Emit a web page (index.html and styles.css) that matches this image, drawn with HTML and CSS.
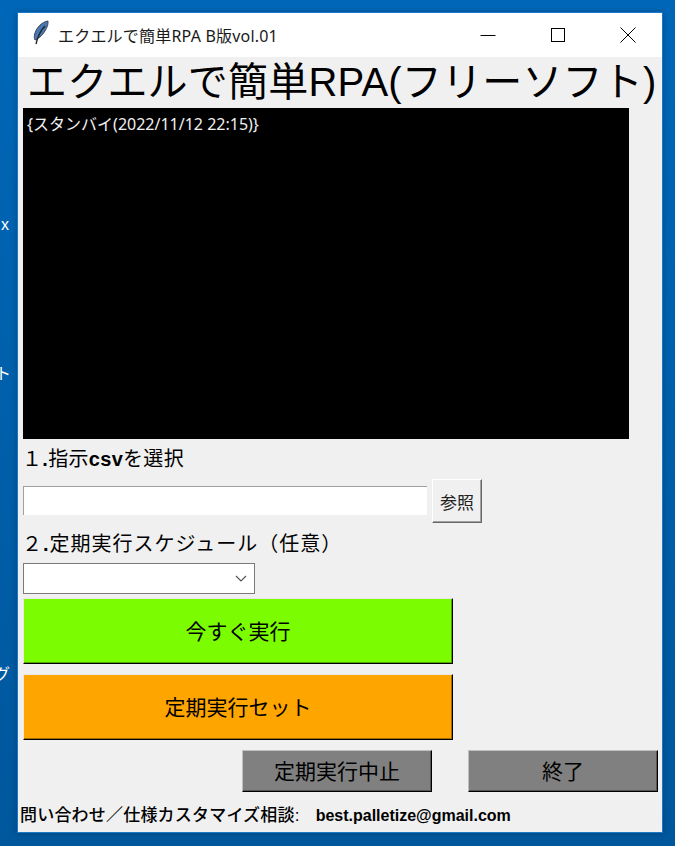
FILE: index.html
```html
<!DOCTYPE html>
<html lang="ja">
<head>
<meta charset="UTF-8">
<title>エクエルで簡単RPA B版vol.01</title>
<link rel="stylesheet" href="styles.css">
</head>
<body>
<!-- desktop icon labels cut off by the window -->
<span class="desk-label desk-x">x</span>
<span class="desk-label desk-to">ト</span>
<span class="desk-label desk-gu">グ</span>

<div class="window">
  <div class="titlebar">
    <svg class="feather" width="20" height="28" viewBox="0 0 20 28">
      <path d="M17 1C11 2 6 7 4 13c-1 3-1 5 0 7l2-1c4-2 8-7 10-12 1-2 1-4 1-6z" fill="#4a78b0" stroke="#3a4656" stroke-width="1"/>
      <path d="M14 6C10 10 7 15 5 24" fill="none" stroke="#1c2530" stroke-width="1.4"/>
    </svg>
    <span class="title-text">エクエルで簡単RPA B版vol.01</span>
    <div class="controls">
      <svg class="ctl" width="70" height="16" viewBox="0 0 16 16"><path d="M0.5 8.5h15" stroke="#000" fill="none"/></svg>
      <svg class="ctl" width="70" height="16" viewBox="0 0 16 16"><rect x="1.5" y="1.5" width="13" height="13" stroke="#000" fill="none"/></svg>
      <svg class="ctl" width="70" height="16" viewBox="0 0 16 16"><path d="M0.5 0.5l15 15M15.5 0.5l-15 15" stroke="#000" fill="none"/></svg>
    </div>
  </div>

  <div class="content">
    <h1 class="heading">エクエルで簡単RPA(フリーソフト)</h1>
    <div class="log">{スタンバイ(2022/11/12 22:15)}</div>

    <div class="label label-1">１<b>.</b>指示<b>csv</b>を選択</div>
    <div class="file-row">
      <input class="entry" type="text">
      <button class="btn browse">参照</button>
    </div>

    <div class="label label-2">２<b>.</b>定期実行スケジュール（任意）</div>
    <div class="combo">
      <svg width="12" height="7" viewBox="0 0 12 7"><path d="M1 1l5 5 5-5" fill="none" stroke="#555" stroke-width="1.2"/></svg>
    </div>

    <button class="btn big run">今すぐ実行</button>
    <button class="btn big set">定期実行セット</button>

    <div class="bottom-row">
      <button class="btn gray">定期実行中止</button>
      <button class="btn gray">終了</button>
    </div>

    <div class="footer"><span>問い合わせ／仕様カスタマイズ相談:</span><b>best.palletize@gmail.com</b></div>
  </div>
</div>
</body>
</html>
```

FILE: styles.css
```css
html,body{margin:0;height:846px;overflow:hidden;}
body{background:linear-gradient(#0067b8,#00579c);font-family:"Liberation Sans","Noto Sans CJK JP",sans-serif;position:relative;}

.desk-label{position:absolute;color:#fff;font-size:16px;line-height:20px;}
.desk-x{left:1px;top:215px;}
.desk-to{left:-5px;top:364px;}
.desk-gu{left:-6px;top:665px;}

.window{position:absolute;left:17px;top:12px;width:644px;height:819px;border:1px solid #1a78c8;background:#f0f0f0;box-shadow:0 0 6px rgba(0,0,0,.25);}

.titlebar{height:44px;background:#fff;display:flex;align-items:center;position:relative;}
.feather{margin-left:13px;margin-top:-2px;}
.title-text{margin-left:7px;font-family:"Noto Sans","Noto Sans CJK JP",sans-serif;font-size:16px;letter-spacing:.2px;color:#1a1a1a;white-space:nowrap;}
.controls{margin-left:auto;margin-right:-1px;display:flex;margin-top:-1px;}
.ctl{display:block;}

.content{padding-left:5px;}
.heading{margin:0 0 0 4px;height:51px;font-size:40px;font-weight:400;line-height:51px;letter-spacing:.2px;color:#000;white-space:nowrap;}
.log{width:602px;height:331px;padding-left:4px;background:#000;color:#f0f0f0;font-family:"Noto Sans","Noto Sans CJK JP",sans-serif;font-size:16px;line-height:33px;white-space:nowrap;}

.label{font-size:20px;line-height:26px;color:#000;margin-left:-1px;}
.label b{font-weight:700;}
.label-1{margin-top:7px;letter-spacing:.3px;}
.label-2{margin-top:8px;letter-spacing:1px;}

.file-row{display:flex;align-items:flex-start;margin-top:7px;}
.entry{width:404px;height:29px;box-sizing:border-box;border:0;border-top:1px solid #a0a0a0;border-left:1px solid #a0a0a0;background:#fff;padding:0;margin:7px 0 0;}
.btn{display:block;box-sizing:border-box;margin:0;padding:0;font-family:inherit;color:#000;border:1px solid;border-color:#fff #696969 #696969 #fff;background:#f0f0f0;box-shadow:inset -1px -1px 0 #a0a0a0;}
.browse{width:50px;height:44px;margin-left:5px;font-size:17px;color:#222;}

.combo{width:232px;height:31px;box-sizing:border-box;border:1px solid #7a7a7a;background:#fff;display:flex;align-items:center;justify-content:flex-end;padding-right:7px;margin-top:6px;}

.big{width:430px;height:66px;padding-bottom:2px;font-size:21px;border-color:#e8e8e8 #000 #000 #e8e8e8;box-shadow:inset -1px -1px 0 rgba(0,0,0,.35);}
.run{background:#7cfc00;margin-top:4px;}
.set{background:#ffa500;margin-top:10px;}

.bottom-row{display:flex;gap:36px;margin:10px 0 0 219px;}
.gray{width:190px;height:42px;padding-bottom:2px;font-size:21px;background:#808080;border-color:#c0c0c0 #000 #000 #c0c0c0;box-shadow:inset -1px -1px 0 #555;}

.footer{display:flex;gap:16px;margin:11px 0 0 -3px;font-size:17px;font-weight:700;line-height:26px;color:#000;white-space:nowrap;}
.footer span{font-weight:500;letter-spacing:.2px;}
.footer b{font-size:16px;}
```
